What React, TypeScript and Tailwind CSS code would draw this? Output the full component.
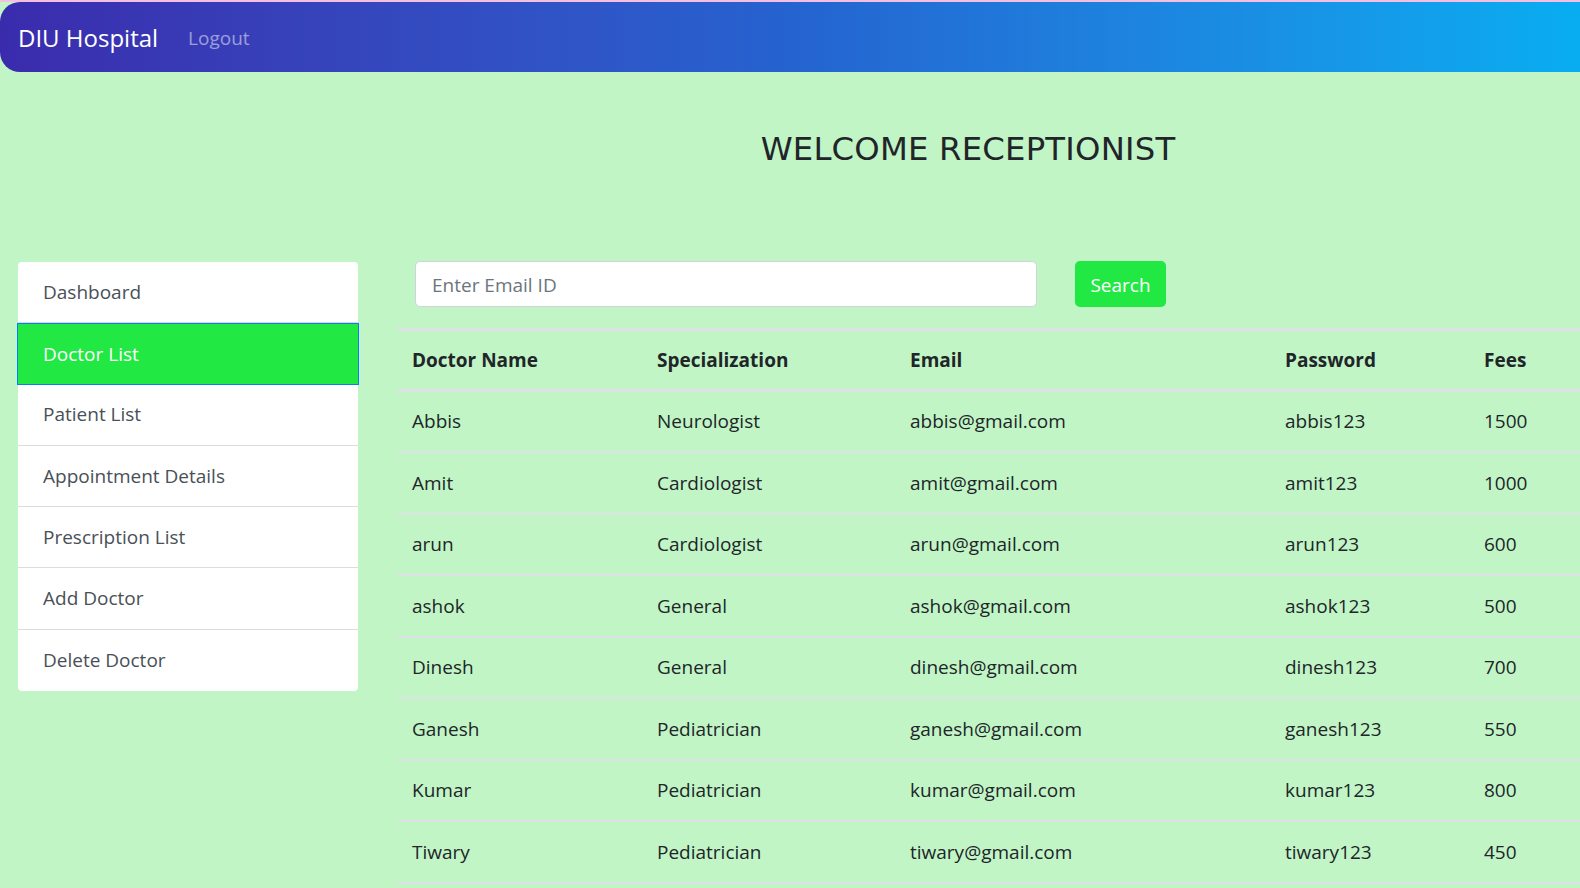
import React from 'react';

const doctors = [
    { name: 'Abbis', spec: 'Neurologist', email: 'abbis@gmail.com', pass: 'abbis123', fees: '1500' },
    { name: 'Amit', spec: 'Cardiologist', email: 'amit@gmail.com', pass: 'amit123', fees: '1000' },
    { name: 'arun', spec: 'Cardiologist', email: 'arun@gmail.com', pass: 'arun123', fees: '600' },
    { name: 'ashok', spec: 'General', email: 'ashok@gmail.com', pass: 'ashok123', fees: '500' },
    { name: 'Dinesh', spec: 'General', email: 'dinesh@gmail.com', pass: 'dinesh123', fees: '700' },
    { name: 'Ganesh', spec: 'Pediatrician', email: 'ganesh@gmail.com', pass: 'ganesh123', fees: '550' },
    { name: 'Kumar', spec: 'Pediatrician', email: 'kumar@gmail.com', pass: 'kumar123', fees: '800' },
    { name: 'Tiwary', spec: 'Pediatrician', email: 'tiwary@gmail.com', pass: 'tiwary123', fees: '450' },
];

const menu = ['Dashboard', 'Doctor List', 'Patient List', 'Appointment Details', 'Prescription List', 'Add Doctor', 'Delete Doctor'];

const App = () => {
    return (
        <div className="min-h-screen bg-[#c1f5c6] border-t-2 border-[#f4bfe0] text-[#212529] font-['Open_Sans',sans-serif] text-[19px] overflow-hidden">
            {/* Navbar */}
            <nav className="h-[70px] rounded-l-[20px] bg-gradient-to-r from-[#3a2bad] via-[#2563d0] to-[#08adf1] flex items-center pl-[18px] gap-[30px] pt-[2px]">
                <span className="text-white text-[24px]">DIU Hospital</span>
                <span className="text-white/50 text-[19px]">Logout</span>
            </nav>

            <div className="pl-[356px] flex justify-center pt-[58px] h-[190px]">
                <h3 className="font-['DejaVu_Sans',sans-serif] text-[32.3px] tracking-[0.2px] text-[#212529] leading-[1.2]">WELCOME RECEPTIONIST</h3>
            </div>

            <div className="flex">
                {/* Sidebar */}
                <div className="w-[398px] shrink-0 pl-[18px] pr-[40px]">
                    <div className="bg-white rounded-[4px]">
                        {menu.map((m, i) => (
                            <div
                                key={m}
                                className={
                                    i === 1
                                        ? 'h-[61.3px] flex items-center pl-[25px] bg-[#22e844] text-white border border-[#0a7bff] -mx-px'
                                        : 'h-[61.3px] flex items-center pl-[25px] text-[#495057] border-b border-[#dcdcdc] last:border-b-0'
                                }
                            >
                                {m}
                            </div>
                        ))}
                    </div>
                </div>

                {/* Main */}
                <div className="flex-1 min-w-0">
                    <div className="flex items-center pl-[17px] gap-[38px] -mt-px">
                        <div className="w-[622px] h-[46px] bg-white border border-[#ced4da] rounded-[5px] flex items-center pl-[16px] pt-[2px] text-[#6c757d]">
                            Enter Email ID
                        </div>
                        <button className="w-[91px] h-[46px] bg-[#22e844] text-white rounded-[5px] pt-[2px]">Search</button>
                    </div>

                    <table className="mt-[21px] w-full border-collapse text-left">
                        <thead>
                            <tr className="border-t-[3px] border-b-[3px] border-[#dee2e6]">
                                <th className="w-[245px] h-[61px] pl-[14px] font-bold">Doctor Name</th>
                                <th className="w-[253px] pl-[14px] font-bold">Specialization</th>
                                <th className="w-[375px] pl-[14px] font-bold">Email</th>
                                <th className="w-[199px] pl-[14px] font-bold">Password</th>
                                <th className="pl-[14px] font-bold">Fees</th>
                            </tr>
                        </thead>
                        <tbody>
                            {doctors.map((d) => (
                                <tr key={d.name} className="border-b-2 border-[#dee2e6]">
                                    <td className="h-[61.5px] pl-[14px]">{d.name}</td>
                                    <td className="pl-[14px]">{d.spec}</td>
                                    <td className="pl-[14px]">{d.email}</td>
                                    <td className="pl-[14px]">{d.pass}</td>
                                    <td className="pl-[14px]">{d.fees}</td>
                                </tr>
                            ))}
                        </tbody>
                    </table>
                </div>
            </div>
        </div>
    );
};

export default App;
